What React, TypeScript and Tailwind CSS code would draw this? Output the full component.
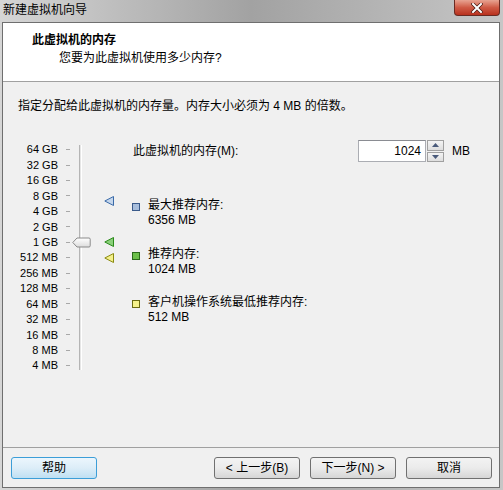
import React from "react";

const font = { fontFamily: '"Liberation Sans", "Noto Sans CJK SC", sans-serif' };

const scale = [
  "64 GB", "32 GB", "16 GB", "8 GB", "4 GB", "2 GB", "1 GB",
  "512 MB", "256 MB", "128 MB", "64 MB", "32 MB", "16 MB", "8 MB", "4 MB",
];

function Marker({ fill, stroke, className }: { fill: string; stroke: string; className: string }) {
  return (
    <svg width="10" height="10" viewBox="0 0 10 10" className={className}>
      <polygon points="9.5,0.5 9.5,9.5 0.8,5" fill={fill} stroke={stroke} strokeLinejoin="round" />
    </svg>
  );
}

function Button({ label, primary }: { label: string; primary?: boolean }) {
  return (
    <div
      className={
        primary
          ? "w-[86px] h-[22px] rounded-[3px] border border-[#3c9ed8] bg-gradient-to-b from-[#ecf6fd] via-[#dcedf8] to-[#bfe0f3] flex items-center justify-center text-[12px] text-black"
          : "w-[86px] h-[22px] rounded-[3px] border border-[#707070] bg-gradient-to-b from-[#f3f3f3] via-[#ebebeb] to-[#d6d6d6] flex items-center justify-center text-[12px] text-black"
      }
    >
      {label}
    </div>
  );
}

function Legend({ color, border, title, value }: { color: string; border: string; title: string; value: string }) {
  return (
    <div className="flex items-start">
      <div className="w-[8px] h-[8px] mt-[5px] border" style={{ background: color, borderColor: border }} />
      <div className="ml-[8px] text-[12px] leading-[15px] text-black">
        <div>{title}</div>
        <div>{value}</div>
      </div>
    </div>
  );
}

export default function App() {
  return (
    <div
      className="w-[503px] h-[490px] flex flex-col pl-[2px] pr-[3px] pb-[2px] bg-gradient-to-r from-[#d6d6d6] via-[#a2a2a2] to-[#c6c6c6] overflow-hidden"
      style={font}
    >
      {/* title bar */}
      <div className="h-[22px] flex items-start justify-between relative">
        <span className="ml-[1px] mt-[3px] text-[12px] leading-[15px] text-black">新建虚拟机向导</span>
        <div className="w-[46px] h-[16px] mr-[0px] rounded-b-[4px] border border-t-0 border-[#6a2a22] bg-gradient-to-b from-[#e7a392] via-[#cf5a45] to-[#b8301d] flex items-center justify-center">
          <svg width="12" height="10" viewBox="0 0 12 10">
            <path d="M2 1 L10 9 M10 1 L2 9" stroke="#4a1a12" strokeWidth="3.4" strokeLinecap="square" />
            <path d="M2 1 L10 9 M10 1 L2 9" stroke="#ffffff" strokeWidth="2" strokeLinecap="square" />
          </svg>
        </div>
      </div>

      {/* client */}
      <div className="flex-1 flex flex-col border border-[#6f6f6f] bg-[#f0f0f0]">
        <div className="h-[59px] bg-white border-b border-[#a0a0a0] pl-[29px] pt-[10px]">
          <div className="text-[12px] leading-[15px] font-bold text-black">此虚拟机的内存</div>
          <div className="ml-[27px] mt-[3px] text-[12px] leading-[15px] text-black">您要为此虚拟机使用多少内存?</div>
        </div>

        <div className="flex-1 flex flex-col">
          <div className="ml-[15px] mt-[16px] text-[12px] leading-[16px] text-black">
            指定分配给此虚拟机的内存量。内存大小必须为 4 MB 的倍数。
          </div>

          <div className="flex mt-[27px]">
            {/* slider */}
            <div className="relative w-[128px] flex">
              <div className="w-[55px] flex flex-col items-end mt-[1px]">
                {scale.map((s) => (
                  <div key={s} className="h-[15.43px] flex items-center text-[11px] text-black whitespace-nowrap">
                    {s}
                  </div>
                ))}
              </div>
              <div className="ml-[8px] w-[4px] flex flex-col mt-[1px]">
                {scale.map((s) => (
                  <div key={s} className="h-[15.43px] flex items-center">
                    <div className="w-[4px] h-[1px] bg-[#a8a8a8]" />
                  </div>
                ))}
              </div>
              <div className="ml-[9px] mt-[4px] w-[3px] h-[225px] border-l border-[#b4b4b4] border-r border-r-[#ffffff] bg-[#e6e6e6]" />

              <svg width="19" height="11" viewBox="0 0 19 11" className="absolute left-[69px] top-[96px]">
                <defs>
                  <linearGradient id="th" x1="0" y1="0" x2="0" y2="1">
                    <stop offset="0" stopColor="#ffffff" />
                    <stop offset="1" stopColor="#dcdcdc" />
                  </linearGradient>
                </defs>
                <path d="M0.8 5.5 L5 1 H17 Q18.2 1 18.2 2.2 V8.8 Q18.2 10 17 10 H5 Z" fill="url(#th)" stroke="#8a8a8a" />
              </svg>
              <Marker fill="#c4d6ec" stroke="#3a6aa8" className="absolute left-[101px] top-[55px]" />
              <Marker fill="#8ad07a" stroke="#2a8a1a" className="absolute left-[101px] top-[96px]" />
              <Marker fill="#f4f08a" stroke="#8a8a10" className="absolute left-[101px] top-[112px]" />
            </div>

            {/* right column */}
            <div className="ml-[1px] flex flex-col">
              <div className="flex items-center -mt-[1px] h-[22px]">
                <div className="ml-[1px] w-[225px] text-[12px] text-black">此虚拟机的内存(M):</div>
                <div className="w-[68px] h-[22px] bg-white border border-[#abadb3] border-t-[#8a8c92] flex items-center justify-end pr-[4px] text-[12px] text-black">
                  1024
                </div>
                <div className="ml-[1px] w-[17px] h-[22px] flex flex-col gap-[1px]">
                  <div className="flex-1 border border-[#a0a0a0] bg-gradient-to-b from-[#f4f4f4] to-[#dedede] flex items-center justify-center">
                    <svg width="7" height="4" viewBox="0 0 7 4"><polygon points="3.5,0 7,4 0,4" fill="#4a5a7a" /></svg>
                  </div>
                  <div className="flex-1 border border-[#a0a0a0] bg-gradient-to-b from-[#f4f4f4] to-[#dedede] flex items-center justify-center">
                    <svg width="7" height="4" viewBox="0 0 7 4"><polygon points="0,0 7,0 3.5,4" fill="#4a5a7a" /></svg>
                  </div>
                </div>
                <div className="ml-[8px] text-[12px] text-black">MB</div>
              </div>

              <div className="mt-[36px]">
                <Legend color="#a8bedc" border="#3a5a8a" title="最大推荐内存:" value="6356 MB" />
              </div>
              <div className="mt-[19px]">
                <Legend color="#6cc04a" border="#2a6a1a" title="推荐内存:" value="1024 MB" />
              </div>
              <div className="mt-[18px]">
                <Legend color="#f6f28a" border="#6a6a10" title="客户机操作系统最低推荐内存:" value="512 MB" />
              </div>
            </div>
          </div>
        </div>

        <div className="h-[40px] border-t border-[#a0a0a0] flex items-start pt-[9px] pl-[8px] pr-[7px]">
          <Button label="帮助" primary />
          <div className="flex-1" />
          <div className="flex gap-[10px]">
            <Button label="< 上一步(B)" />
            <Button label="下一步(N) >" />
            <Button label="取消" />
          </div>
        </div>
      </div>
    </div>
  );
}
